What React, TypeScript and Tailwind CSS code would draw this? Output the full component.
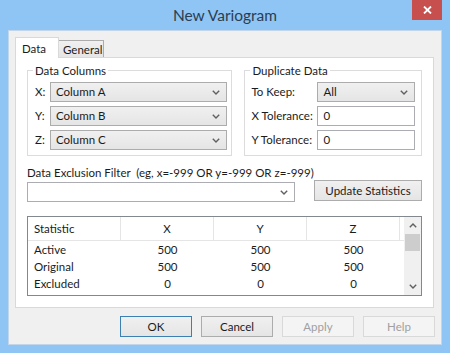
import React from 'react';

const font = { fontFamily: '"Segoe UI", Lato, "Noto Sans", sans-serif' };

function Chevron({ up = false, className = '' }: { up?: boolean; className?: string }) {
  return (
    <svg width="8" height="5" viewBox="0 0 8 5" className={className}>
      <path
        d={up ? 'M0.8 4.2 L4 1 L7.2 4.2' : 'M0.8 0.8 L4 4 L7.2 0.8'}
        fill="none"
        stroke="#606060"
        strokeWidth="1.4"
      />
    </svg>
  );
}

function Combo({ value, width, editable = false }: { value: string; width: string; editable?: boolean }) {
  return (
    <div
      className={`${width} h-[20px] flex items-center justify-between pl-[5px] pr-[6px] border ${
        editable ? 'bg-white border-[#abadb3]' : 'bg-gradient-to-b from-[#f0f0f0] to-[#e5e5e5] border-[#acacac]'
      }`}
    >
      <span className="leading-none">{value}</span>
      <Chevron />
    </div>
  );
}

function TextBox({ value }: { value: string }) {
  return (
    <div className="w-[98px] h-[20px] flex items-center pl-[5px] bg-white border border-[#abadb3]">
      <span className="leading-none">{value}</span>
    </div>
  );
}

function Group({ title, className, children }: { title: string; className: string; children: React.ReactNode }) {
  return (
    <div className={`relative border border-[#dcdcdc] pt-[11px] pb-[5px] ${className}`}>
      <span className="absolute left-[5px] top-[-8px] px-[2px] bg-white leading-[15px]">{title}</span>
      <div className="flex flex-col gap-[4px]">{children}</div>
    </div>
  );
}

function Button({ label, variant = 'normal' }: { label: string; variant?: 'normal' | 'default' | 'disabled' }) {
  const cls =
    variant === 'default'
      ? 'border-[#3c7fb1] bg-gradient-to-b from-[#f0f0f0] to-[#e5e5e5] text-[#1b1b1b]'
      : variant === 'disabled'
      ? 'border-[#d9d9d9] bg-[#f4f4f4] text-[#a0a0a0]'
      : 'border-[#acacac] bg-gradient-to-b from-[#f0f0f0] to-[#e5e5e5] text-[#1b1b1b]';
  return (
    <div className={`w-[72px] h-[21px] flex items-center justify-center border ${cls}`}>{label}</div>
  );
}

const rows = [
  ['Active', '500', '500', '500'],
  ['Original', '500', '500', '500'],
  ['Excluded', '0', '0', '0'],
];

export default function App() {
  return (
    <div style={font} className="w-[450px] h-[353px] bg-[#8ec5f4] flex flex-col text-[11.5px] text-[#1b1b1b]">
      {/* title bar */}
      <div className="relative h-[30px] flex items-center justify-center">
        <span className="text-[15.5px] text-[#2b3d52] mt-[1px]">New Variogram</span>
        <div className="absolute right-[8px] top-0 w-[30px] h-[20px] bg-[#c7504f] flex items-center justify-center">
          <svg width="9" height="8" viewBox="0 0 9 8">
            <path d="M1 0.5 L8 7.5 M8 0.5 L1 7.5" stroke="#ffffff" strokeWidth="1.8" />
          </svg>
        </div>
      </div>

      {/* client */}
      <div className="mx-[8px] h-[315px] bg-[#f0f0f0] border border-[#c3d5e8] flex flex-col pt-[6px]">
        {/* tabs */}
        <div className="flex items-end h-[20px] pl-[6px]">
          <div className="relative z-10 w-[44px] h-[21px] -mb-px bg-white border border-b-0 border-[#d9d9d9] pl-[6px] pt-[2px]">
            Data
          </div>
          <div className="w-[45px] h-[17px] border border-b-0 border-l-0 border-[#acacac] bg-gradient-to-b from-[#f0f0f0] to-[#e5e5e5] pl-[4px] leading-[17px]">
            General
          </div>
        </div>

        {/* panel */}
        <div className="ml-[6px] mr-[7px] h-[251px] bg-white border border-[#d9d9d9] flex flex-col px-[11px]">
          <div className="flex gap-[12px] mt-[12px]">
            <Group title="Data Columns" className="w-[206px] h-[86px] pl-[7px]">
              {[
                ['X:', 'Column A'],
                ['Y:', 'Column B'],
                ['Z:', 'Column C'],
              ].map(([l, v]) => (
                <div key={l} className="flex items-center">
                  <span className="w-[15px]">{l}</span>
                  <Combo value={v} width="w-[177px]" />
                </div>
              ))}
            </Group>
            <Group title="Duplicate Data" className="w-[178px] h-[86px] pl-[6px]">
              <div className="flex items-center">
                <span className="w-[66px]">To Keep:</span>
                <Combo value="All" width="w-[98px]" />
              </div>
              <div className="flex items-center">
                <span className="w-[66px]">X Tolerance:</span>
                <TextBox value="0" />
              </div>
              <div className="flex items-center">
                <span className="w-[66px]">Y Tolerance:</span>
                <TextBox value="0" />
              </div>
            </Group>
          </div>

          <div className="mt-[10px] leading-[14px]">Data Exclusion Filter&nbsp; (eg, x=-999 OR y=-999 OR z=-999)</div>
          <div className="flex justify-between items-start mt-[2px]">
            <Combo value="" width="w-[268px]" editable />
            <div className="w-[108px] h-[21px] -mt-[2px] flex items-center justify-center border border-[#acacac] bg-gradient-to-b from-[#f0f0f0] to-[#e5e5e5]">
              Update Statistics
            </div>
          </div>

          {/* statistics table */}
          <div className="mt-[14px] h-[80px] border border-[#828790] flex">
            <div className="flex-1 flex flex-col">
              <div className="grid grid-cols-[93px_93px_93px_93px_1fr] h-[24px] border-b border-[#e5e5e5]">
                <div className="flex items-center pl-[6px] border-r border-[#e5e5e5]">Statistic</div>
                <div className="flex items-center justify-center border-r border-[#e5e5e5]">X</div>
                <div className="flex items-center justify-center border-r border-[#e5e5e5]">Y</div>
                <div className="flex items-center justify-center border-r border-[#e5e5e5]">Z</div>
                <div />
              </div>
              {rows.map((r) => (
                <div key={r[0]} className="grid grid-cols-[93px_93px_93px_93px_1fr] h-[17px] items-center">
                  <div className="pl-[6px]">{r[0]}</div>
                  <div className="text-center">{r[1]}</div>
                  <div className="text-center">{r[2]}</div>
                  <div className="text-center">{r[3]}</div>
                  <div />
                </div>
              ))}
            </div>
            <div className="w-[17px] bg-[#f0f0f0] flex flex-col items-center">
              <div className="h-[17px] flex items-center justify-center">
                <Chevron up />
              </div>
              <div className="w-[15px] h-[17px] bg-[#cdcdcd]" />
              <div className="flex-1" />
              <div className="h-[17px] flex items-center justify-center">
                <Chevron />
              </div>
            </div>
          </div>
        </div>

        {/* buttons */}
        <div className="flex justify-end gap-[9px] mt-[8px] pr-[6px]">
          <Button label="OK" variant="default" />
          <Button label="Cancel" />
          <Button label="Apply" variant="disabled" />
          <Button label="Help" variant="disabled" />
        </div>
      </div>
    </div>
  );
}
